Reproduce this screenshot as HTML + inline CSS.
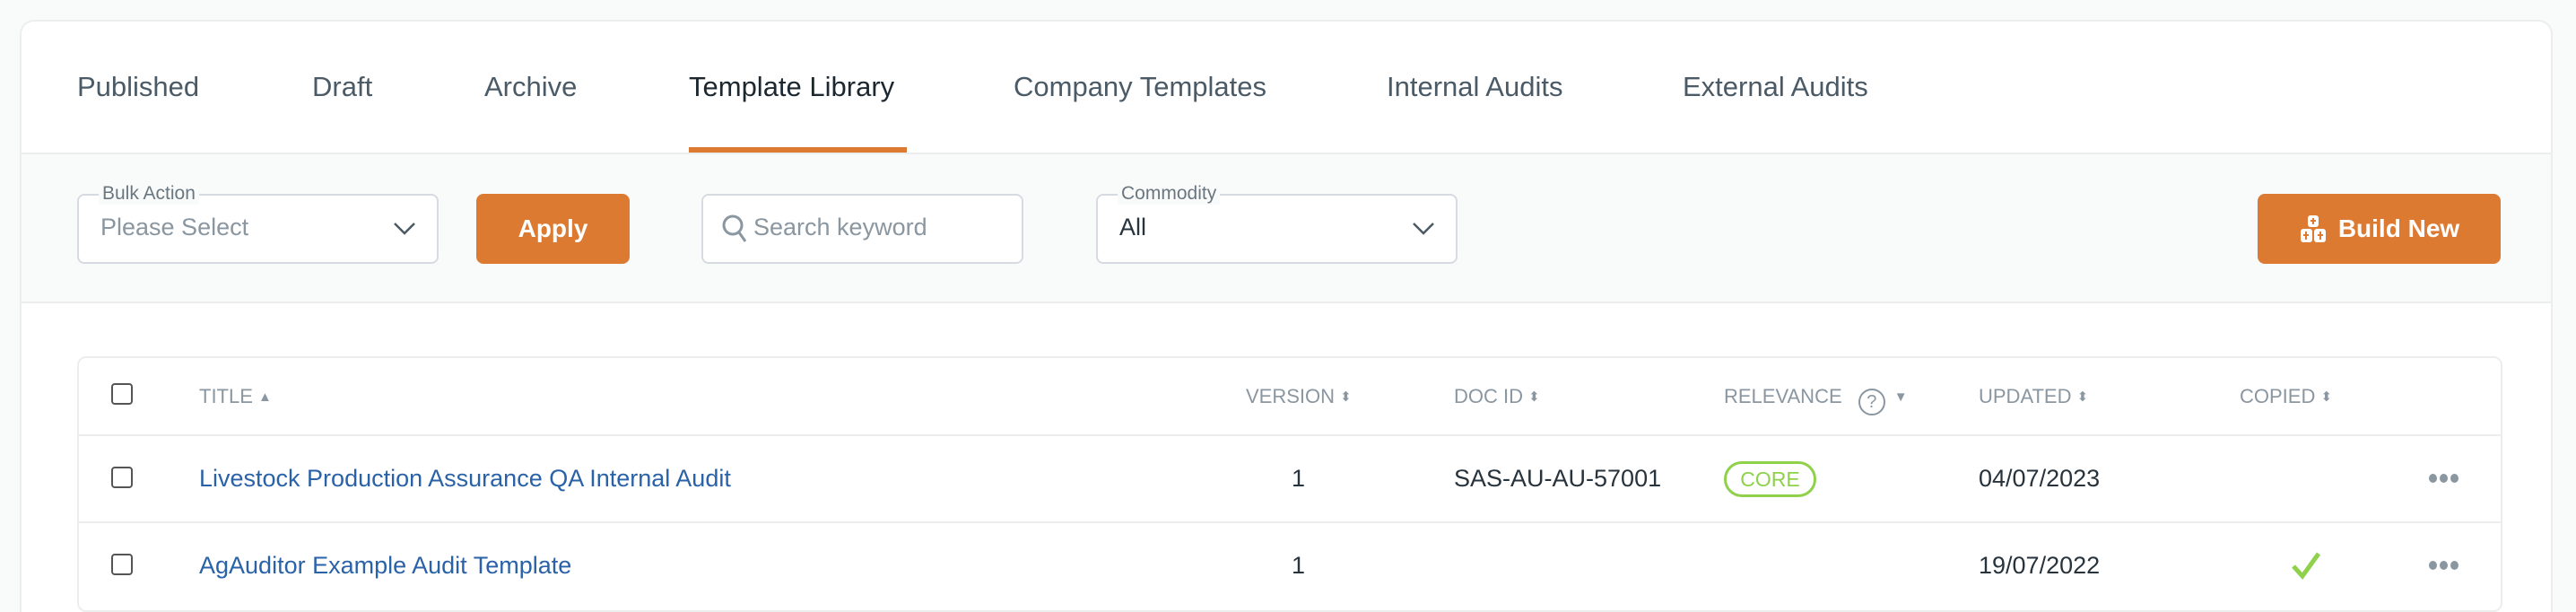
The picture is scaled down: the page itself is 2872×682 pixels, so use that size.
<!DOCTYPE html>
<html><head><meta charset="utf-8"><style>
*{box-sizing:border-box;margin:0;padding:0}
html,body{width:2872px;height:682px;overflow:hidden}
body{background:#f9fbfb;font-family:"Liberation Sans",sans-serif;position:relative}
.card{position:absolute;left:22px;top:22px;width:2824px;height:660px;background:#fff;border:2px solid #eceeee;border-bottom:none;border-radius:16px 16px 0 0;overflow:hidden}
.abs{position:absolute}
.tab{position:absolute;top:55px;font-size:31px;color:#4a5a66;white-space:nowrap}
.filter{position:absolute;left:0;top:146px;width:100%;height:168px;background:#f9fbfb;border-top:2px solid #eceeee;border-bottom:2px solid #eceeee}
.inp{position:absolute;background:#fff;border:2px solid #d5dbe0;border-radius:8px;height:78px;top:44px}
.lbl{position:absolute;top:-14px;left:22px;background:#f9fbfb;padding:0 4px;font-size:21px;color:#6b7780}
.btn{position:absolute;top:44px;height:78px;background:#dc7a32;border-radius:8px;color:#fff;font-size:28px;font-weight:bold;display:flex;align-items:center;justify-content:center}
.tbl{position:absolute;left:62px;top:373px;width:2704px;height:285px;border:2px solid #eceeee;border-radius:10px;overflow:hidden}
.row{position:absolute;left:0;width:100%;border-bottom:2px solid #eceeee}
.h{position:absolute;font-size:22px;color:#8a96a0;top:30px;white-space:nowrap}
.c{position:absolute;font-size:27px;color:#27333d;white-space:nowrap}
.cb{position:absolute;left:36px;width:24px;height:24px;border:2px solid #555;border-radius:4px;background:#fff}
.s{font-size:15px;color:#8a96a0;vertical-align:2px}
.dots{position:absolute;left:2620px;display:flex;gap:3px}
.dots i{width:9px;height:10px;border-radius:50%;background:#8a96a0}
</style></head><body>
<div class="card">
  <div class="tab" style="left:62px">Published</div>
  <div class="tab" style="left:324px">Draft</div>
  <div class="tab" style="left:516px">Archive</div>
  <div class="tab" style="left:744px;color:#1c2730">Template Library</div>
  <div class="tab" style="left:1106px">Company Templates</div>
  <div class="tab" style="left:1522px">Internal Audits</div>
  <div class="tab" style="left:1852px">External Audits</div>
  <div class="abs" style="left:744px;top:140px;width:243px;height:6px;background:#dc7a32"></div>
  <div class="filter">
    <div class="inp" style="left:62px;width:403px">
      <div class="lbl">Bulk Action</div>
      <div class="abs" style="left:24px;top:20px;font-size:27px;color:#8a96a0">Please Select</div>
      <svg class="abs" style="left:350px;top:28px" width="26" height="18" viewBox="0 0 26 18"><path d="M2 3 L13 14 L24 3" fill="none" stroke="#4a5a66" stroke-width="2.5"/></svg>
    </div>
    <div class="btn" style="left:507px;width:171px">Apply</div>
    <div class="inp" style="left:758px;width:359px">
      <svg class="abs" style="left:20px;top:20px" width="30" height="34" viewBox="0 0 30 34"><circle cx="13" cy="13" r="10" fill="none" stroke="#8a96a0" stroke-width="3"/><path d="M20 21 L27 31" stroke="#8a96a0" stroke-width="3"/></svg>
      <div class="abs" style="left:56px;top:20px;font-size:27px;color:#8a96a0">Search keyword</div>
    </div>
    <div class="inp" style="left:1198px;width:403px">
      <div class="lbl">Commodity</div>
      <div class="abs" style="left:24px;top:20px;font-size:27px;color:#27333d">All</div>
      <svg class="abs" style="left:350px;top:28px" width="26" height="18" viewBox="0 0 26 18"><path d="M2 3 L13 14 L24 3" fill="none" stroke="#4a5a66" stroke-width="2.5"/></svg>
    </div>
    <div class="btn" style="left:2493px;width:271px"><svg width="32" height="34" viewBox="0 0 32 34" style="margin-right:12px"><g fill="#fff"><rect x="10" y="2" width="12" height="13" rx="3"/><rect x="2" y="17" width="13" height="15" rx="3"/><rect x="17" y="17" width="13" height="15" rx="3"/></g><g stroke="#dc7a32" stroke-width="2"><path d="M16 5v7M13 8h6M8 20v9M5 24h6M24 20v9M21 24h6"/></g></svg>Build New</div>
  </div>
  <div class="tbl">
    <div class="row" style="top:0;height:87px">
      <div class="cb" style="top:28px"></div>
      <div class="h" style="left:134px">TITLE <span class="s">▲</span></div>
      <div class="h" style="left:1301px">VERSION <span class="s">⬍</span></div>
      <div class="h" style="left:1533px">DOC ID <span class="s">⬍</span></div>
      <div class="h" style="left:1834px">RELEVANCE <span style="display:inline-block;width:30px;height:30px;border:2.5px solid #8a96a0;border-radius:50%;text-align:center;font-size:20px;line-height:26px;margin:0 10px 0 12px;vertical-align:-5px">?</span><span class="s">▼</span></div>
      <div class="h" style="left:2118px">UPDATED <span class="s">⬍</span></div>
      <div class="h" style="left:2409px">COPIED <span class="s">⬍</span></div>
    </div>
    <div class="row" style="top:87px;height:97px">
      <div class="cb" style="top:34px"></div>
      <div class="c" style="left:134px;top:32px;color:#2a62a8">Livestock Production Assurance QA Internal Audit</div>
      <div class="c" style="left:1352px;top:32px">1</div>
      <div class="c" style="left:1533px;top:32px">SAS-AU-AU-57001</div>
      <div class="abs" style="left:1834px;top:28px;width:103px;height:40px;border:3px solid #8fd14a;border-radius:20px;color:#8fd14a;font-size:23px;text-align:center;line-height:34px">CORE</div>
      <div class="c" style="left:2118px;top:32px">04/07/2023</div>
      <div class="dots" style="top:42px"><i></i><i></i><i></i></div>
    </div>
    <div class="row" style="top:184px;height:97px;border-bottom:none">
      <div class="cb" style="top:34px"></div>
      <div class="c" style="left:134px;top:32px;color:#2a62a8">AgAuditor Example Audit Template</div>
      <div class="c" style="left:1352px;top:32px">1</div>
      <div class="c" style="left:2118px;top:32px">19/07/2022</div>
      <svg class="abs" style="left:2466px;top:30px" width="34" height="34" viewBox="0 0 34 34"><path d="M3 18 L13 29 L31 4" fill="none" stroke="#8fd14a" stroke-width="5"/></svg>
      <div class="dots" style="top:42px"><i></i><i></i><i></i></div>
    </div>
  </div>
</div>
</body></html>
